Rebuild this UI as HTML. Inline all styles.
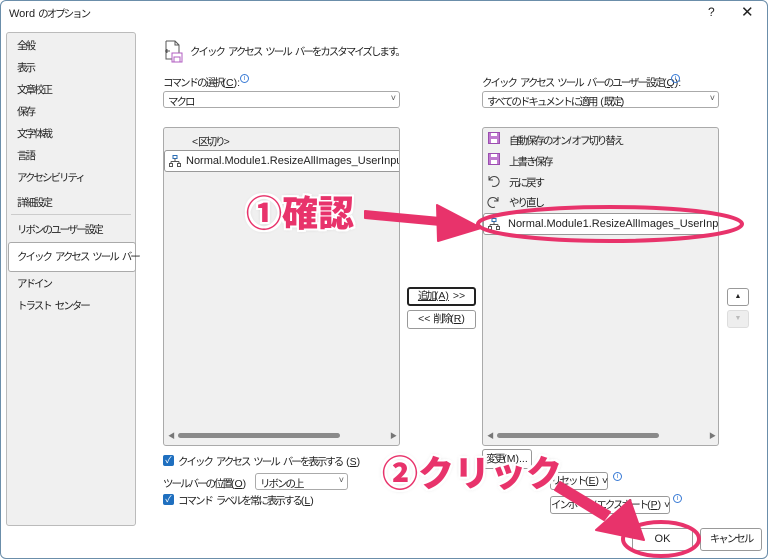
<!DOCTYPE html>
<html><head><meta charset="utf-8">
<style>
*{box-sizing:border-box;margin:0;padding:0}
body{width:768px;height:559px;background:#fff;font-family:"Liberation Sans","Noto Sans CJK JP",sans-serif;font-size:10.5px;letter-spacing:-2px;word-spacing:3px;color:#222;position:relative;overflow:hidden}
.win{position:absolute;left:0;top:0;width:768px;height:559px;border:1px solid #6b8eaa;border-radius:6px;background:#fff}
.a{position:absolute;white-space:nowrap}
.lat{letter-spacing:0;word-spacing:0;font-size:11px}
.l{letter-spacing:0;word-spacing:0}
.left{position:absolute;left:6px;top:32px;width:130px;height:494px;background:#f0f0f0;border:1px solid #bbb;border-radius:3px}
.left .t{position:absolute;left:10px;white-space:nowrap}
.sel{position:absolute;left:1px;top:209px;width:128px;height:30px;background:#fff;border:1px solid #aaa;border-radius:3px}
.dd{position:absolute;background:#fff;border:1px solid #aaa;border-radius:3px;padding:2px 4px;white-space:nowrap}
.dd:after{content:"˅";position:absolute;right:5px;top:1px;font-size:9px;color:#555}
.list{position:absolute;background:#f0f0f0;border:1px solid #aaa;border-radius:3px;overflow:hidden}
.btn{position:absolute;background:#fff;border:1px solid #999;border-radius:3px;text-align:center;white-space:nowrap}
.info{position:absolute;width:9px;height:9px;border:1px solid #3a7bd5;border-radius:50%;color:#3a7bd5;font-size:7px;line-height:7px;text-align:center;letter-spacing:0}
.chk{position:absolute;width:11px;height:11px;background:#1f6fbf;border-radius:2px;color:#fff;font-size:9px;line-height:11px;text-align:center;letter-spacing:0}
.sb{position:absolute;height:10px;letter-spacing:0}
.big{font-family:"Noto Sans CJK JP",sans-serif;font-weight:900;letter-spacing:0;color:#e8336b;text-shadow:2px 0 #fff,-2px 0 #fff,0 2px #fff,0 -2px #fff,2px 2px #fff,-2px -2px #fff,2px -2px #fff,-2px 2px #fff,0 0 4px #aaa}
</style></head><body>
<div class="win"></div>
<div class="a" style="left:9px;top:6px"><span class="lat">Word </span>のオプション</div>
<div class="a lat" style="left:708px;top:5px;font-size:12px">?</div>
<div class="a lat" style="left:741px;top:3px;font-size:15px">✕</div>

<div class="left">
<div class="sel"></div>
<div class="t" style="top:5px">全般</div>
<div class="t" style="top:27px">表示</div>
<div class="t" style="top:49px">文章校正</div>
<div class="t" style="top:71px">保存</div>
<div class="t" style="top:93px">文字体裁</div>
<div class="t" style="top:115px">言語</div>
<div class="t" style="top:137px">アクセシビリティ</div>
<div class="t" style="top:162px">詳細設定</div>
<div style="position:absolute;top:181px;left:4px;width:120px;height:1px;background:#ccc"></div>
<div class="t" style="top:189px">リボンのユーザー設定</div>
<div class="t" style="top:216px">クイック アクセス ツール バー</div>
<div class="t" style="top:243px">アドイン</div>
<div class="t" style="top:265px">トラスト センター</div>
</div>

<svg class="a" style="left:163px;top:40px" width="24" height="24" viewBox="0 0 24 24"><path d="M3 1h9l4 4v8M3 1v18h6" fill="none" stroke="#555"/><path d="M12 1v4h4" fill="none" stroke="#555"/><rect x="9" y="13" width="10" height="9" fill="#fff" stroke="#b05cc0"/><rect x="11" y="17" width="6" height="5" fill="none" stroke="#b05cc0"/><path d="M2 11h5M4 9v4" stroke="#555"/></svg>
<div class="a" style="left:190px;top:44px">クイック アクセス ツール バーをカスタマイズします。</div>

<div class="a" style="left:163px;top:75px">コマンドの選択<span class="l">(<u>C</u>):</span></div>
<div class="info" style="left:240px;top:74px">i</div>
<div class="dd" style="left:163px;top:91px;width:237px;height:17px">マクロ</div>

<div class="list" style="left:163px;top:127px;width:237px;height:319px">
<div class="a" style="left:28px;top:6px"><span class="l">&lt;</span>区切り<span class="l">&gt;</span></div>
<div class="a" style="left:0;top:22px;width:237px;height:22px;background:#fff;border:1px solid #999;border-radius:3px"></div>
<svg class="a" style="left:5px;top:27px" width="12" height="12" viewBox="0 0 12 12"><rect x="4" y="0.5" width="4" height="3" fill="none" stroke="#2a6db5"/><path d="M6 3.5v3M2 6.5h8M2 6.5v2M10 6.5v2" stroke="#555" fill="none"/><rect x="0.5" y="8.5" width="3" height="3" fill="none" stroke="#555"/><rect x="8.5" y="8.5" width="3" height="3" fill="none" stroke="#555"/></svg>
<div class="a lat" style="left:22px;top:27px">Normal.Module1.ResizeAllImages_UserInput</div>
<div class="sb" style="left:4px;top:303px;font-size:7px;color:#777">◀</div>
<div class="sb" style="left:14px;top:305px;width:162px;height:5px;background:#8a8a8a;border-radius:3px"></div>
<div class="sb" style="left:226px;top:303px;font-size:7px;color:#777">▶</div>
</div>

<div class="a" style="left:482px;top:75px">クイック アクセス ツール バーのユーザー設定<span class="l">(<u>Q</u>):</span></div>
<div class="info" style="left:671px;top:74px">i</div>
<div class="dd" style="left:482px;top:91px;width:237px;height:17px">すべてのドキュメントに適用 <span class="l">(</span>既定<span class="l">)</span></div>

<div class="list" style="left:482px;top:127px;width:237px;height:319px">
<svg class="a" style="left:5px;top:4px" width="12" height="12"><rect x="0.5" y="0.5" width="11" height="11" fill="#c07ad0" stroke="#9b4db0"/><rect x="3" y="7" width="6" height="4" fill="#fff"/><rect x="3" y="1" width="6" height="3" fill="#fff"/></svg>
<div class="a" style="left:26px;top:5px">自動保存のオン<span class="l">/</span>オフ切り替え</div>
<svg class="a" style="left:5px;top:25px" width="12" height="12"><rect x="0.5" y="0.5" width="11" height="11" fill="#c07ad0" stroke="#9b4db0"/><rect x="3" y="7" width="6" height="4" fill="#fff"/><rect x="3" y="1" width="6" height="3" fill="#fff"/></svg>
<div class="a" style="left:26px;top:26px">上書き保存</div>
<svg class="a" style="left:4px;top:46px" width="13" height="13"><path d="M2 2v4h4M2.5 5.5A5 5 0 1 1 5 12" fill="none" stroke="#444"/></svg>
<div class="a" style="left:26px;top:47px">元に戻す</div>
<svg class="a" style="left:4px;top:67px" width="13" height="13"><path d="M11 2v4h-4M10.5 5.5A5 5 0 1 0 8 12" fill="none" stroke="#444"/></svg>
<div class="a" style="left:26px;top:67px">やり直し</div>
<div class="a" style="left:0;top:85px;width:237px;height:22px;background:#fff;border:1px solid #999;border-radius:3px"></div>
<svg class="a" style="left:5px;top:90px" width="12" height="12" viewBox="0 0 12 12"><rect x="4" y="0.5" width="4" height="3" fill="none" stroke="#2a6db5"/><path d="M6 3.5v3M2 6.5h8M2 6.5v2M10 6.5v2" stroke="#555" fill="none"/><rect x="0.5" y="8.5" width="3" height="3" fill="none" stroke="#555"/><rect x="8.5" y="8.5" width="3" height="3" fill="none" stroke="#555"/></svg>
<div class="a lat" style="left:25px;top:90px">Normal.Module1.ResizeAllImages_UserInput</div>
<div class="sb" style="left:4px;top:303px;font-size:7px;color:#777">◀</div>
<div class="sb" style="left:14px;top:305px;width:162px;height:5px;background:#8a8a8a;border-radius:3px"></div>
<div class="sb" style="left:226px;top:303px;font-size:7px;color:#777">▶</div>
</div>

<div class="btn" style="left:407px;top:287px;width:69px;height:19px;border:2px solid #222;line-height:15px"><u>追加<span class="l">(A)</span></u> <span class="l">&gt;&gt;</span></div>
<div class="btn" style="left:407px;top:310px;width:69px;height:19px;line-height:17px"><span class="l">&lt;&lt; </span>削除<span class="l">(<u>R</u>)</span></div>
<div class="btn" style="left:727px;top:288px;width:22px;height:18px;font-size:7px;line-height:16px;letter-spacing:0">▲</div>
<div class="btn" style="left:727px;top:310px;width:22px;height:18px;font-size:7px;line-height:16px;background:#eee;border-color:#ddd;color:#bbb;letter-spacing:0">▼</div>

<div class="chk" style="left:163px;top:455px">✓</div>
<div class="a" style="left:178px;top:454px">クイック アクセス ツール バーを表示する <span class="l">(<u>S</u>)</span></div>
<div class="a" style="left:163px;top:476px">ツールバーの位置<span class="l">(<u>O</u>)</span></div>
<div class="dd" style="left:255px;top:473px;width:93px;height:17px">リボンの上</div>
<div class="chk" style="left:163px;top:494px">✓</div>
<div class="a" style="left:178px;top:493px">コマンド ラベルを常に表示する<span class="l">(<u>L</u>)</span></div>

<div class="btn" style="left:482px;top:449px;width:50px;height:20px;line-height:18px">変更<span class="l">(M)...</span></div>
<div class="btn" style="left:550px;top:472px;width:58px;height:18px;line-height:16px">リセット<span class="l">(<u>E</u>) ˅</span></div>
<div class="info" style="left:613px;top:472px">i</div>
<div class="btn" style="left:550px;top:496px;width:120px;height:18px;line-height:16px">インポート<span class="l">/</span>エクスポート<span class="l">(<u>P</u>) ˅</span></div>
<div class="info" style="left:673px;top:494px">i</div>

<div class="btn lat" style="left:632px;top:528px;width:61px;height:23px;line-height:21px">OK</div>
<div class="btn" style="left:700px;top:528px;width:62px;height:23px;line-height:21px">キャンセル</div>

<svg class="a" style="left:0;top:0" width="768" height="559">
<g fill="#e8336b" stroke="#e8336b" stroke-linejoin="round">
<path d="M365 211 L440 218 L440 225 L365 218 Z" stroke-width="2"/>
<path d="M437 205 L481 228 L438 241 Z" stroke-width="2"/>
<path d="M560 482 L610 512 L604 520 L555 490 Z" stroke-width="2"/>
<path d="M596 530 L644 540 L630 500 Z" stroke-width="2"/>
</g>
<ellipse cx="610" cy="224" rx="132" ry="17" fill="none" stroke="#e8336b" stroke-width="4"/>
<ellipse cx="661" cy="539" rx="38" ry="17" fill="none" stroke="#e8336b" stroke-width="4"/>
</svg>
<div class="a big" style="left:246px;top:188px;font-size:36px;line-height:46px">①確認</div>
<div class="a big" style="left:382px;top:448px;font-size:36px;line-height:46px">②クリック</div>
</body></html>
